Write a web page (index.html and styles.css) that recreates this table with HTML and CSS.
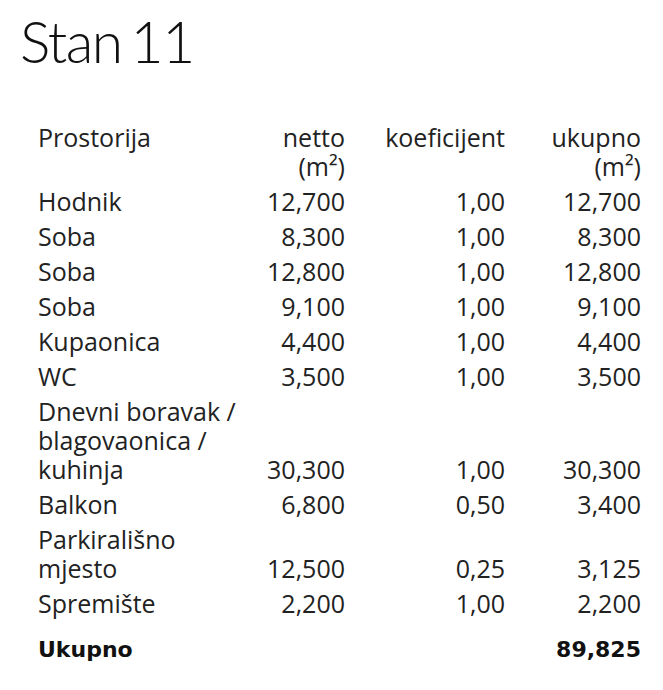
FILE: index.html
```html
<!DOCTYPE html>
<html>
<head>
<meta charset="utf-8">
<link rel="stylesheet" href="styles.css">
</head>
<body>
<h1 class="title">Stan 11</h1>
<table class="rooms">
  <thead>
    <tr><th class="name">Prostorija</th><th>netto<br>(m²)</th><th>koeficijent</th><th>ukupno<br>(m²)</th></tr>
  </thead>
  <tbody>
    <tr><td class="name">Hodnik</td><td>12,700</td><td>1,00</td><td>12,700</td></tr>
    <tr><td class="name">Soba</td><td>8,300</td><td>1,00</td><td>8,300</td></tr>
    <tr><td class="name">Soba</td><td>12,800</td><td>1,00</td><td>12,800</td></tr>
    <tr><td class="name">Soba</td><td>9,100</td><td>1,00</td><td>9,100</td></tr>
    <tr><td class="name">Kupaonica</td><td>4,400</td><td>1,00</td><td>4,400</td></tr>
    <tr><td class="name">WC</td><td>3,500</td><td>1,00</td><td>3,500</td></tr>
    <tr><td class="name">Dnevni boravak /<br>blagovaonica /<br>kuhinja</td><td>30,300</td><td>1,00</td><td>30,300</td></tr>
    <tr><td class="name">Balkon</td><td>6,800</td><td>0,50</td><td>3,400</td></tr>
    <tr><td class="name">Parkirališno<br>mjesto</td><td>12,500</td><td>0,25</td><td>3,125</td></tr>
    <tr><td class="name">Spremište</td><td>2,200</td><td>1,00</td><td>2,200</td></tr>
  </tbody>
  <tfoot>
    <tr class="total"><td class="name">Ukupno</td><td></td><td></td><td>89,825</td></tr>
  </tfoot>
</table>
</body>
</html>
```
FILE: styles.css
```css
html, body {
  margin: 0;
  padding: 0;
  background: #fff;
}
body {
  padding: 0 22px 0 22px;
  color: #1a1a1a;
}
.title {
  font-family: Lato, "Liberation Sans", sans-serif;
  font-weight: 300;
  font-size: 57px;
  line-height: 1;
  margin: 13px 0 0 -2px;
  color: #111;
  letter-spacing: -1.5px;
  word-spacing: -5px;
}
.rooms {
  margin: 50px 0 0 16px;
  border-collapse: collapse;
  font-family: "Open Sans", "Liberation Sans", sans-serif;
  font-size: 25px;
  line-height: 29px;
  color: #222;
}
.rooms th, .rooms td {
  font-weight: 400;
  text-align: right;
  vertical-align: bottom;
  padding: 3px 0;
  white-space: nowrap;
}
.rooms th {
  vertical-align: top;
}
.rooms .name {
  text-align: left;
  width: 200px;
}
.rooms th:nth-child(2), .rooms td:nth-child(2) { width: 107px; }
.rooms th:nth-child(3), .rooms td:nth-child(3) { width: 160px; }
.rooms th:nth-child(4), .rooms td:nth-child(4) { width: 136px; }
.rooms .total td {
  font-family: "DejaVu Sans", "Liberation Sans", sans-serif;
  font-weight: 700;
  font-size: 22px;
  padding-top: 14px;
  color: #111;
}
```
